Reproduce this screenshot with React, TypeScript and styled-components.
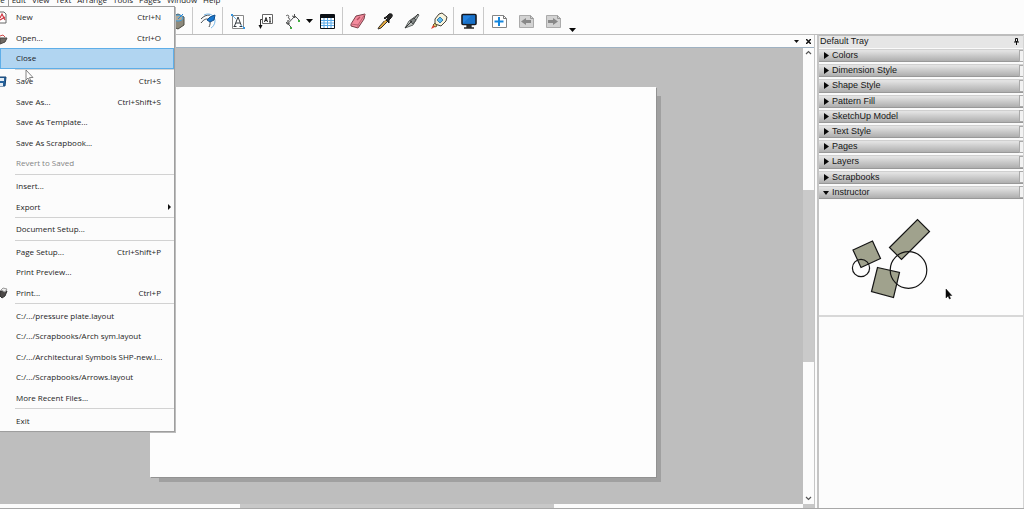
import React from "react";
import styled, { createGlobalStyle } from "styled-components";

const GlobalStyle = createGlobalStyle`
  * { box-sizing: border-box; }
  body { margin: 0; background: #fcfcfc; overflow: hidden; }
  button { font: inherit; color: inherit; border: 0; padding: 0; background: none; }
`;

const Window = styled.div`
  position: relative;
  display: flex;
  flex-direction: column;
  height: 100vh;
  background: #fcfcfc;
  border-bottom: 1px solid #a8a8a8;
  color: #1c1c1c;
  font-family: "Open Sans", "Noto Sans", sans-serif;
  font-size: 8px;
`;

const MenuBar = styled.nav`
  display: flex;
  align-items: flex-end;
  height: 7px;
  padding-bottom: 1px;
  overflow: hidden;
  flex: none;
`;

const MenuTitle = styled.button<{ $open?: boolean }>`
  flex: none;
  line-height: 12px;
  padding: 0 3px;
  ${(p) => p.$open && "margin-left: -11px; border-right: 1px solid #999;"}
`;

const Toolbar = styled.div`
  display: flex;
  flex: none;
  height: 28px;
  border-bottom: 1px solid #bdbdbd;
`;

const ToolGroup = styled.div<{ $first?: boolean; $last?: boolean }>`
  display: flex;
  align-items: center;
  justify-content: flex-end;
  padding: 0 1px;
  width: ${(p) => (p.$first ? "193px" : "auto")};
  border-right: ${(p) => (p.$last ? "0" : "1px solid #c9c9c9")};
`;

const ToolButton = styled.button`
  display: grid;
  place-items: center;
  width: 27px;
  height: 26px;
  svg { display: block; width: 18px; height: 18px; }
`;

const Caret = styled.button<{ $low?: boolean }>`
  display: flex;
  width: ${(p) => (p.$low ? "13px" : "9px")};
  height: 22px;
  align-items: ${(p) => (p.$low ? "flex-end" : "center")};
  justify-content: center;
  svg { width: 7px; height: 4px; }
`;

const Workspace = styled.div`
  display: flex;
  flex: 1;
  min-height: 0;
`;

const DocumentArea = styled.main`
  display: flex;
  flex: 1;
  flex-direction: column;
  min-width: 0;
  border-right: 1px solid #c6c6c6;
`;

const TabStrip = styled.div`
  display: flex;
  align-items: center;
  justify-content: flex-end;
  gap: 7px;
  height: 13px;
  padding-right: 3px;
  border-bottom: 1px solid #9fb2c2;
  svg { display: block; width: 5px; height: 5px; }
`;

const DocumentBody = styled.div`
  display: flex;
  flex: 1;
  min-height: 0;
`;

const Canvas = styled.div`
  display: flex;
  flex: 1;
  padding: 39px 147px 27px 150px;
  background: #bebebe;
`;

const Paper = styled.div`
  flex: 1;
  background: #fdfdfd;
  box-shadow: 1px 1px 0 #929292, 7px 7px 0 -2px #a0a0a0;
`;

const VerticalScroll = styled.div`
  display: grid;
  grid-template-rows: 142fr 173fr 142fr;
  justify-items: center;
  width: 11px;
  background: #fcfcfc;
  svg { width: 7px; height: 10px; }
  svg:last-child { align-self: end; }
`;

const VerticalThumb = styled.div`
  width: 100%;
  background: #cacaca;
`;

const HorizontalScroll = styled.div`
  display: grid;
  grid-template-columns: 240fr 314fr 249fr 11px;
  height: 4px;
  flex: none;
  background: #fcfcfc;
`;

const HorizontalThumb = styled.div<{ $column: number }>`
  grid-column: ${(p) => p.$column};
  background: #c8c8c8;
`;

const Tray = styled.aside`
  display: flex;
  flex-direction: column;
  flex: 0 0 207px;
  margin-left: 2px;
  border-left: 2px solid #c4c4c4;
  border-right: 1px solid #d4d4d4;
  color: #161616;
  font-family: "Liberation Sans", Arial, sans-serif;
  font-size: 9px;
`;

const TrayTitle = styled.h1`
  display: flex;
  align-items: center;
  justify-content: space-between;
  height: 13px;
  margin: 0;
  padding: 0 4px 1px 1px;
  background: #e6e6e6;
  border-top: 1px solid #bcbcbc;
  font-size: 9px;
  font-weight: 400;
  line-height: 11px;
  svg { width: 5px; height: 7px; }
`;

const Sections = styled.div`
  display: grid;
  grid-auto-rows: 1fr;
  height: 152px;
`;

const SectionHeader = styled.button`
  display: flex;
  align-items: center;
  gap: 3px;
  padding-left: 4px;
  border: solid #fafafa;
  border-width: 1px 0 1px;
  box-shadow: inset 0 -1px 0 #989898, inset 0 1px 0 #d0d0d0;
  background: linear-gradient(#e2e2e2 15%, #cacaca 50%, #a9a9a9);
  text-align: left;
  line-height: 11px;
  svg { width: 6px; height: 7px; flex: none; }
  &::after {
    content: "";
    width: 3px;
    height: 10px;
    margin-left: auto;
    border: 1px solid #aaa;
    border-right: 0;
    background: #f2f2f2;
  }
`;

const Instructor = styled.section`
  height: 117px;
  border-bottom: 2px solid #d8d8d8;
  background: #fdfdfd;
  svg { display: block; width: 160px; height: 115px; }
`;

const FileMenu = styled.div`
  position: absolute;
  top: 6px;
  left: 0;
  z-index: 2;
  display: flex;
  flex-direction: column;
  width: 175px;
  height: 426px;
  background: #fcfcfc;
  border: solid #9e9e9e;
  border-width: 1px 1px 1px 0;
  box-shadow: 1px 1px 0 #bcbcbc;
`;

const MenuItem = styled.button<{ $active?: boolean; $submenu?: boolean }>`
  display: grid;
  grid-template-columns: 8px 1fr auto;
  align-items: center;
  gap: 8px;
  flex: 1 1 0;
  min-height: 0;
  padding-right: ${(p) => (p.$submenu ? "2px" : "13px")};
  line-height: 12px;
  text-align: left;
  white-space: nowrap;
  background: ${(p) => (p.$active ? "#b1d5f1" : "transparent")};
  outline: ${(p) => (p.$active ? "1px solid #5eaee8" : "0")};
  outline-offset: -1px;
  &:disabled { color: #858585; }
  svg { display: block; width: 8px; height: 14px; }
`;

const SubmenuMark = styled.span`
  && svg { width: 4px; height: 6px; }
`;

const Separator = styled.hr`
  width: calc(100% - 15px);
  height: 2px;
  margin: 0 0 0 15px;
  border: 0;
  border-top: 1px solid #d2d2d2;
  flex: none;
`;

const Pointer = styled.svg`
  position: absolute;
  top: 69px;
  left: 25px;
  z-index: 3;
  width: 9px;
  height: 14px;
  pointer-events: none;
`;

const art: Record<string, React.ReactNode> = {
  tape: (
    <>
      <path d="M2 5 9 2l6 3v8l-6 4-7-3z" fill="#8d897b" stroke="#4a4a42" />
      <ellipse cx="9" cy="6" rx="5" ry="3" fill="#b0aa98" stroke="#38a0e8" />
      <path d="m9 7 5-5" stroke="#2286dc" />
    </>
  ),
  offset: (
    <>
      <path d="M2 7c3-3 5-4 9-4M2 11c3-4 6-5 8-3 2 2 1 5 0 7" fill="none" stroke="#454b50" />
      <path d="M5 3c6-3 11 1 11 6 0 3-2 6-4 7" fill="none" stroke="#79b8e8" />
      <path d="m8 8 3-3 5-2-1 5-4 2z" fill="#1877cf" stroke="#134e8a" />
    </>
  ),
  text: (
    <>
      <path d="M3.500 3.500h11v13h-11z" fill="#fff" stroke="#888" />
      <path d="m5.500 14 3.500-9 3.500 9M7 11h4M4.500 14.500h3M10.500 14.500h3" fill="none" stroke="#33393e" />
      <path d="m3 3 4 4M12 13l3 3" stroke="#69b6ee" />
      <path d="M2 2h2v2H2zm12 13h2v2h-2z" fill="#3996df" />
    </>
  ),
  label: (
    <>
      <path d="M6.500 2.500h10v9h-10z" fill="#fff" stroke="#666" />
      <path d="m8.500 10 1.500-4.500 1.500 4.500M9 8.500h2M13 6l1-1v5m-1 0h2" fill="none" stroke="#222" />
      <path d="M6 7.500H4.500V14" fill="none" stroke="#333" />
      <path d="M2.500 13h4l-2 4z" fill="#111" />
    </>
  ),
  dimension: (
    <>
      <path d="M5 11.500 11 5M11 3l5 5M3 10l5 5" fill="none" stroke="#4d5153" />
      <path d="M3 4c2-2 4 0 2 2 3 0 2 3-1 3M9 4l4 1M11.500 2v4M3 11l4 1M5 9v4" fill="none" stroke="#555" />
      <path d="M15 8h2v2h-2zM7 15h2v2H7z" fill="#42ac42" />
    </>
  ),
  table: (
    <>
      <rect x="1" y="2" width="15" height="15" rx="1" fill="#0b1016" />
      <path d="M2 6h13v10H2z" fill="#fff" />
      <path d="M2 8.500h13M2 11h13M2 13.500h13M5 6v10M8.500 6v10M12 6v10" stroke="#58a9e8" />
    </>
  ),
  eraser: (
    <>
      <path d="m2 12 5-8 9-2-1 5-6 9-7-2z" fill="#f48b9d" stroke="#754049" />
      <path d="m2 12 7 1 7-11M9 13v3" fill="none" stroke="#bd6272" />
      <path d="m8 8 3-3" stroke="#b24f60" strokeWidth="1.500" />
    </>
  ),
  dropper: (
    <>
      <path d="m3 15 7-8 2 2-7 7-3 1z" fill="#e5aa3f" stroke="#383229" />
      <path d="m8 6 2-1 3-3c4-1 4 2 2 4l-2 2v3z" fill="#262626" stroke="#171717" />
      <path d="m8 9 3-3" stroke="#ddd" />
    </>
  ),
  knife: (
    <>
      <path d="m2 16 4-7 7-5 2-2 1 1-3 5-3 5z" fill="#b9bdbb" stroke="#606664" />
      <path d="m7 9 3 3 3-4-2-2z" fill="#808584" stroke="#4c5050" />
      <path d="m2 16 7-7M11 7l4-5" stroke="#353535" />
    </>
  ),
  glue: (
    <>
      <path d="m5 7 4-5 3-1 5 4-1 4-5 5-6-2z" fill="#f8f4dd" stroke="#49443b" />
      <path d="m7 8 3-3 3 3-3 3z" fill="#60b7ed" stroke="#337fac" />
      <path d="m5 11 2 3-2 1-2-2z" fill="#ddc46b" stroke="#685d36" />
      <path d="m3 13 2 2-4 2z" fill="#df3f2d" />
    </>
  ),
  monitor: (
    <>
      <rect x="2" y="2.500" width="14" height="10" rx="1" fill="#2482df" stroke="#141820" strokeWidth="1.600" />
      <path d="M3 11 12 3h3v9H3z" fill="#1268bd" opacity=".65" />
      <path d="M7 13h4v3H7zM4 16h10" fill="#333" stroke="#282828" strokeWidth="1.300" />
    </>
  ),
  add: (
    <>
      <path d="M2.500 3.500h11l3 3v9h-14z" fill="#fff" stroke="#858585" />
      <path d="M13.500 3.500v3h3" fill="none" stroke="#777" />
      <path d="M9 5v9M4.500 9.500h9" stroke="#1385dd" strokeWidth="2" />
    </>
  ),
  previous: (
    <>
      <path d="M2.500 3.500h11l3 3v9h-14z" fill="#d3d3d3" stroke="#ababab" />
      <path d="M13.500 3.500v3h3" fill="none" stroke="#999" />
      <path d="M14 8v3H9v2L4 9.500 9 6v2z" fill="#888" />
    </>
  ),
  next: (
    <>
      <path d="M2.500 3.500h11l3 3v9h-14z" fill="#d3d3d3" stroke="#ababab" />
      <path d="M13.500 3.500v3h3" fill="none" stroke="#999" />
      <path d="M4 8v3h5v2l5-3.500L9 6v2z" fill="#888" />
    </>
  ),
};

const Tool = ({ name }: { name: string }) => (
  <ToolButton aria-label={name}>
    <svg viewBox="0 0 18 18">{art[name]}</svg>
  </ToolButton>
);

const DownMark = () => (
  <svg viewBox="0 0 7 4"><path d="M0 0h7L3.500 4z" fill="#080808" /></svg>
);

const fileArt: Record<string, React.ReactNode> = {
  New: (
    <>
      <path d="M-1 2h5l2 2v9h-7" fill="#fff" stroke="#666" />
      <path d="m0 8 2-4 3 6M0 10l5-3" fill="none" stroke="#cf3540" strokeWidth="1.200" />
    </>
  ),
  "Open...": (
    <>
      <path d="M0 7h7l-2 4-5 2z" fill="#716b65" stroke="#494644" />
      <path d="m0 5 3-1 2 2" fill="none" stroke="#ce4949" />
    </>
  ),
  Save: (
    <>
      <path d="M0 3h6l-1 9H0" fill="#27639d" stroke="#174574" />
      <path d="M0 4h4v3H0zM0 9h3v3H0z" fill="#e5edf4" />
    </>
  ),
  "Print...": (
    <>
      <path d="m0 5 7 0-2 5-3 2-2-2z" fill="#4c4948" stroke="#333" />
      <path d="m1 4 2-2 4 1-2 3z" fill="#eee" stroke="#999" />
    </>
  ),
};

type Entry = { label: string; keys?: string; disabled?: boolean; submenu?: boolean; active?: boolean };

const fileGroups: Entry[][] = [
  [{ label: "New", keys: "Ctrl+N" }, { label: "Open...", keys: "Ctrl+O" }, { label: "Close", active: true }],
  [
    { label: "Save", keys: "Ctrl+S" },
    { label: "Save As...", keys: "Ctrl+Shift+S" },
    { label: "Save As Template..." },
    { label: "Save As Scrapbook..." },
    { label: "Revert to Saved", disabled: true },
  ],
  [{ label: "Insert..." }, { label: "Export", submenu: true }],
  [{ label: "Document Setup..." }],
  [{ label: "Page Setup...", keys: "Ctrl+Shift+P" }, { label: "Print Preview..." }, { label: "Print...", keys: "Ctrl+P" }],
  [
    { label: "C:/.../pressure plate.layout" },
    { label: "C:/.../Scrapbooks/Arch sym.layout" },
    { label: "C:/.../Architectural Symbols SHP-new.l..." },
    { label: "C:/.../Scrapbooks/Arrows.layout" },
    { label: "More Recent Files..." },
  ],
  [{ label: "Exit" }],
];

const titles = ["File", "Edit", "View", "Text", "Arrange", "Tools", "Pages", "Window", "Help"];

const sections = [
  "Colors", "Dimension Style", "Shape Style", "Pattern Fill", "SketchUp Model",
  "Text Style", "Pages", "Layers", "Scrapbooks", "Instructor",
];

export default function App() {
  return (
    <Window>
      <GlobalStyle />
      <MenuBar>
        {titles.map((t, i) => <MenuTitle key={t} $open={i === 0}>{t}</MenuTitle>)}
      </MenuBar>
      <Toolbar>
        <ToolGroup $first><Tool name="tape" /></ToolGroup>
        <ToolGroup><Tool name="offset" /></ToolGroup>
        <ToolGroup>
          <Tool name="text" /><Tool name="label" /><Tool name="dimension" />
          <Caret aria-label="More dimensions"><DownMark /></Caret>
          <Tool name="table" />
        </ToolGroup>
        <ToolGroup><Tool name="eraser" /><Tool name="dropper" /><Tool name="knife" /><Tool name="glue" /></ToolGroup>
        <ToolGroup><Tool name="monitor" /></ToolGroup>
        <ToolGroup $last>
          <Tool name="add" /><Tool name="previous" /><Tool name="next" />
          <Caret $low aria-label="Toolbar options"><DownMark /></Caret>
        </ToolGroup>
      </Toolbar>
      <Workspace>
        <DocumentArea>
          <TabStrip>
            <button aria-label="List documents"><svg viewBox="0 0 5 5"><path d="M0 1h5L2.500 4z" fill="#111" /></svg></button>
            <button aria-label="Close document"><svg viewBox="0 0 5 5"><path d="m0 0 5 5M5 0 0 5" stroke="#111" strokeWidth="1.500" /></svg></button>
          </TabStrip>
          <DocumentBody>
            <Canvas><Paper /></Canvas>
            <VerticalScroll>
              <svg viewBox="0 0 7 10"><path d="m1 6 2.500-2.500L6 6" fill="none" stroke="#555" strokeWidth="1.200" /></svg>
              <VerticalThumb />
              <svg viewBox="0 0 7 10"><path d="m1 3 2.500 2.500L6 3" fill="none" stroke="#555" strokeWidth="1.200" /></svg>
            </VerticalScroll>
          </DocumentBody>
          <HorizontalScroll><HorizontalThumb $column={2} /><HorizontalThumb $column={4} /></HorizontalScroll>
        </DocumentArea>
        <Tray>
          <TrayTitle>
            Default Tray
            <svg viewBox="0 0 5 7"><path d="M1.500.500h2v3h-2zM0 4h5M2.500 4v3" fill="none" stroke="#111" /></svg>
          </TrayTitle>
          <Sections>
            {sections.map((s) => (
              <SectionHeader key={s} aria-expanded={s === "Instructor"}>
                <svg viewBox="0 0 6 7"><path d={s === "Instructor" ? "M0 2h6L3 6z" : "M1 0v7l5-3.500z"} fill="#080808" /></svg>
                {s}
              </SectionHeader>
            ))}
          </Sections>
          <Instructor>
            <svg viewBox="819 200 160 115">
              <g fill="#a0a28d" stroke="#151515" strokeWidth="1.200">
                <path d="m853 250 19.500-9 8 17.500-19.500 9zM889.500 247.500l28-28 12 12-28 28zM877.500 267.500l22 5-6 25-22-6z" />
                <circle cx="861" cy="268" r="8.600" fill="none" />
                <circle cx="908.500" cy="270" r="18.300" fill="none" />
              </g>
              <path d="M946 289v9l2-2 1.500 3 1-.5-1.200-3h2.500z" fill="#080808" stroke="#080808" strokeWidth=".5" />
            </svg>
          </Instructor>
        </Tray>
      </Workspace>
      <FileMenu role="menu" aria-label="File">
        {fileGroups.map((group, i) => (
          <React.Fragment key={i}>
            {i > 0 && <Separator />}
            {group.map((e) => (
              <MenuItem key={e.label} role="menuitem" $active={e.active} $submenu={e.submenu} disabled={e.disabled}>
                <span>{fileArt[e.label] && <svg viewBox="0 0 8 14">{fileArt[e.label]}</svg>}</span>
                <span>{e.label}</span>
                {e.keys && <span>{e.keys}</span>}
                {e.submenu && <SubmenuMark><svg viewBox="0 0 4 6"><path d="M0 0v6l3-3z" fill="#111" /></svg></SubmenuMark>}
              </MenuItem>
            ))}
          </React.Fragment>
        ))}
      </FileMenu>
      <Pointer viewBox="0 0 9 14"><path d="M1 1v10l2-2 2 4 1-.500-1.500-4H8z" fill="#fff" fillOpacity=".7" stroke="#666" strokeWidth=".8" /></Pointer>
    </Window>
  );
}
